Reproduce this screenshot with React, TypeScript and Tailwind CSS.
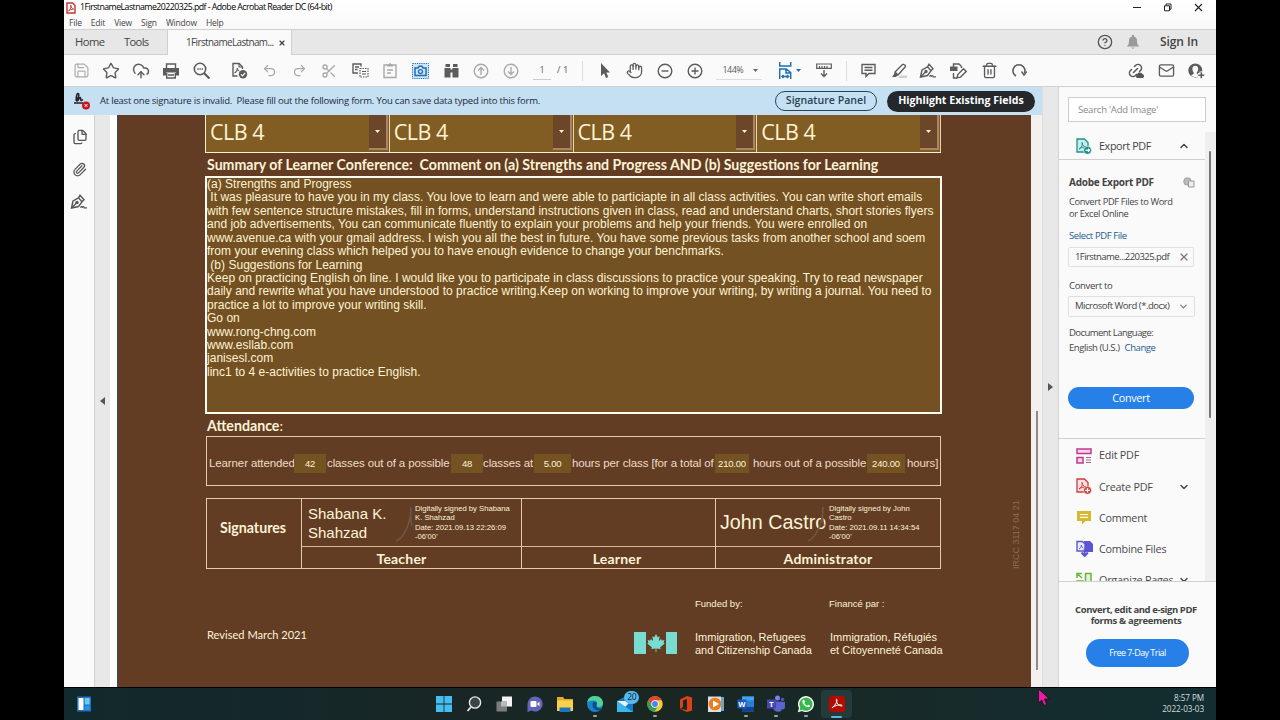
import type { ReactNode } from "react";
import {
  Save, Star, CloudUpload, Undo2, Redo2, Scissors, Hand, Trash2, Mail, Paperclip,
  ChevronUp, ChevronDown, X, CircleHelp, Link2, Files,
} from "lucide-react";

const cream = "#fdf3d6";

function Slot({ children, className = "" }: { children: ReactNode; className?: string }) {
  return <div className={`flex h-6 w-[30px] shrink-0 items-center justify-center ${className}`}>{children}</div>;
}

function Svg({ w = 18, h = 18, box, children }: { w?: number; h?: number; box?: string; children: ReactNode }) {
  return (
    <svg width={w} height={h} viewBox={box ?? `0 0 ${w} ${h}`} fill="none" stroke="currentColor" strokeWidth="1.4" className="shrink-0">
      {children}
    </svg>
  );
}

function SignPen() {
  return (
    <Svg w={18} h={16}>
      <path d="M1.500 14 3 7 8.500 3.800 12 7.800 8.500 12.500Z" />
      <path d="M1.500 14 6.500 9M8.500 3.800l1.500-2.500 4 4.500-2 2" />
      <circle cx="7" cy="8.500" r="1" fill="currentColor" />
      <path d="M10.500 13.800c.8-2 1.800-2 1.800 0 .8-2 1.800-1.500 1.800 0H17" strokeWidth="1.200" />
    </Svg>
  );
}

function TitleBar() {
  return (
    <div className="flex h-[29px] justify-between bg-gradient-to-b from-white to-[#f9f9f9]">
      <div>
        <div className="flex h-[16px] items-center pl-[2px] text-black">
          <Svg w={10} h={12}>
            <path d="M1 1h5.500L9 3.500V11H1Z" fill="#fff" stroke="#c43430" />
            <path d="M2.500 9C5 7 5 5 4.700 3c.3 3 2 4 3 4.200-2 0-3.700.6-5.200 1.800" stroke="#c43430" strokeWidth=".9" />
          </Svg>
          <span className="ml-[4px] text-[8.800px] tracking-[-0.550px] whitespace-pre">1FirstnameLastname20220325.pdf - Adobe Acrobat Reader DC (64-bit)</span>
        </div>
        <div className="flex h-[13px] items-center gap-[9px] pt-px pl-[5px] text-[8.500px] tracking-[-0.180px] text-[#444]">
          <span>File</span><span>Edit</span><span>View</span><span>Sign</span><span>Window</span><span>Help</span>
        </div>
      </div>
      <div className="mt-[2px] mr-[13px] flex h-[10px] items-center gap-[22px] text-[#222]">
        <Svg w={8} h={8}><path d="M0 4.500h8" strokeWidth="1" /></Svg>
        <Svg w={9} h={9}><path d="M1.500 2.800h5v5h-5zM3 2.500V1h5v5.200H6.800" strokeWidth="1" /></Svg>
        <Svg w={9} h={9}><path d="m1 1 7 7M8 1 1 8" strokeWidth="1.100" /></Svg>
      </div>
    </div>
  );
}

function TabBar() {
  return (
    <div className="flex h-[26px] border-y border-[#cfcfcf] bg-[#e7e7e7] text-[#444]">
      <div className="flex w-[104px] items-center border-r border-[#d0d0d0] pt-px pl-[11px] text-[11.200px]">
        <span className="w-[49px] tracking-[-0.500px]">Home</span>
        <span className="tracking-[-0.650px]">Tools</span>
      </div>
      <div className="-mb-px flex w-[124px] items-center border-r border-[#d0d0d0] bg-[#fafafa] pl-[18px]">
        <span className="w-[92px] text-[9.900px] tracking-[-0.580px]">1FirstnameLastnam...</span>
        <X className="h-[8px] w-[8px]" strokeWidth={3.500} />
      </div>
      <div className="ml-auto flex items-center pr-[18px]">
        <CircleHelp className="h-4 w-4 text-[#555]" strokeWidth={2} />
        <svg width="12" height="14" viewBox="0 0 12 14" className="ml-[14px]" fill="#9a9a9a"><path d="M5 0h2v1.500c2.500.6 3 2.500 3 4.500 0 2.500.5 4 2 5v.5H0V11c1.500-1 2-2.500 2-5 0-2 .5-3.900 3-4.500ZM4.500 12.500h3L6 14Z" /></svg>
        <span className="ml-[21px] text-[12px] font-semibold tracking-[-0.100px]">Sign In</span>
      </div>
    </div>
  );
}

function ToolBar() {
  return (
    <div className="flex h-[32px] items-center border-b border-[#d0d0d0] bg-[#fafafa] pl-[2px] text-[#5c5c5c]">
      <Slot className="text-[#adadad]"><Save size={17} strokeWidth={1.700} /></Slot>
      <Slot><Star size={18} strokeWidth={1.900} /></Slot>
      <Slot><CloudUpload size={18} strokeWidth={1.900} /></Slot>
      <Slot><Svg w={16} h={16}>
        <path d="M3.500 5V1h9v4" /><path d="M0 5h16v7.500h-3V9.500H3v3H0Z" fill="currentColor" stroke="none" /><path d="M3.700 10v5h8.600v-5M5 12h6" />
      </Svg></Slot>
      <Slot><Svg w={17} h={17}>
        <circle cx="7" cy="7" r="5.700" strokeWidth="1.600" /><path d="m11 11 5.500 5.500" strokeWidth="2.200" /><path d="M4.200 7h1.400M6.400 7h1.400M8.600 7h1.400" strokeWidth="1.500" />
      </Svg></Slot>
      <Slot className="ml-[8px]"><Svg w={17} h={17}>
        <path d="M6.500 14H2V1.500h6l3.500 3.500V7" /><path d="M8 1.500V5h3.500M3.500 11c2.500-1.500 3-3 2.700-5 .3 2 1 2.700 2 3" strokeWidth="1.100" />
        <circle cx="12" cy="12.300" r="4.200" fill="currentColor" stroke="none" /><path d="m10 12.300 1.500 1.500 2.700-3" stroke="#fff" strokeWidth="1.200" />
      </Svg></Slot>
      <Slot className="text-[#a9a9a9]"><Undo2 size={15} strokeWidth={2} /></Slot>
      <Slot className="text-[#a9a9a9]"><Redo2 size={15} strokeWidth={2} /></Slot>
      <Slot className="text-[#a9a9a9]"><Scissors size={16} strokeWidth={2} /></Slot>
      <Slot className="ml-[1px]"><Svg w={17} h={15}>
        <path d="M6 10H1V1h8v2.500M3 4h4M3 6.500h2.500" /><path d="M8 5.500h8V14H8Z" strokeDasharray="1.500 1" strokeWidth="1.200" /><path d="M10 8.500h4M10 11h4" strokeWidth="1.100" />
      </Svg></Slot>
      <Slot className="text-[#a9a9a9]"><Svg w={14} h={17}>
        <path d="M1 3h12v12.500H1ZM4 8h6M4 11h4" /><path d="M4 4.500V2.500h1.500L7 .8l1.500 1.700H10v2Z" fill="currentColor" stroke="none" />
      </Svg></Slot>
      <Slot className="text-[#1c6fb7]"><Svg w={17} h={16}>
        <path d="M.5.5h16v15H.5Z" fill="#cfe5f8" strokeDasharray="1.200 1" strokeWidth="1" />
        <path d="M3 5h3l1-1.700h3L11 5h3v7.500H3Z" strokeWidth="1.500" /><circle cx="8.500" cy="8.600" r="2" strokeWidth="1.300" />
      </Svg></Slot>
      <Slot className="ml-[1px]"><Svg w={15} h={14}>
        <path d="M1.500 0H6v3H1.500ZM9 0h4.500v3H9ZM.5 4h6v9.500h-6ZM8.500 4h6v9.500h-6ZM6.500 5.500h2v3h-2z" fill="currentColor" stroke="none" />
      </Svg></Slot>
      <Slot className="text-[#a9a9a9]"><Svg w={16} h={16}><circle cx="8" cy="8" r="6.800" /><path d="M8 12V4.500M5 7.500l3-3 3 3" /></Svg></Slot>
      <Slot className="text-[#a9a9a9]"><Svg w={16} h={16}><circle cx="8" cy="8" r="6.800" /><path d="M8 4v7.500M5 8.500l3 3 3-3" /></Svg></Slot>
      <div className="ml-[7px] flex h-[18px] w-[18px] items-center justify-center border-b border-[#ccc] text-[9px]">1</div>
      <span className="ml-[6px] text-[9.500px]">/ 1</span>
      <div className="ml-[14px] h-[20px] w-px bg-[#dcdcdc]" />
      <Slot className="ml-[7px]"><Svg w={12} h={16}><path d="M2 0v13l3-2.800 2 4.800 2.300-1-2-4.600H11Z" fill="currentColor" stroke="none" /></Svg></Slot>
      <Slot className="-ml-px"><Hand size={17} strokeWidth={1.800} /></Slot>
      <Slot className="ml-[1px]"><Svg w={16} h={16}><circle cx="8" cy="8" r="6.800" /><path d="M4.500 8h7" /></Svg></Slot>
      <Slot><Svg w={16} h={16}><circle cx="8" cy="8" r="6.800" /><path d="M4.500 8h7M8 4.500v7" /></Svg></Slot>
      <div className="ml-[6px] flex h-[18px] w-[46px] items-center justify-between border-b border-[#ddd] pr-[4px] pl-[6px] text-[9px] tracking-[-0.500px]">
        144% <svg width="5" height="3" viewBox="0 0 5 3" fill="#666"><path d="M0 0h5L2.500 3Z" /></svg>
      </div>
      <div className="ml-[17px] flex w-[22px] items-center gap-[4px] text-[#1c6fb7]">
        <Svg w={13} h={17}><path d="M.7 0v4h11V0M.7 17V7h6.500l4.500 3.500V17M7 7v4h4.500M3 14.500h6.500M4.500 13 3 14.500 4.500 16M8 13l1.500 1.500L8 16" strokeWidth="1.500" /></Svg>
        <svg width="5" height="3" viewBox="0 0 5 3" fill="currentColor" className="shrink-0"><path d="M0 0h5L2.500 3Z" /></svg>
      </div>
      <Slot className="ml-[8px]"><Svg w={16} h={15}><path d="M.7 1h14.600v4.300H.7ZM3.500 3v2M6 3v2M8.500 3v2M11 3v2" strokeWidth="1.200" /><path d="M8 7v6.500M5 10.500l3 3 3-3" /></Svg></Slot>
      <div className="ml-[7px] h-[20px] w-px bg-[#dcdcdc]" />
      <Slot className="ml-[6px]"><Svg w={15} h={15}><path d="M1 1.500h13v9H8L5 13.500v-3H1ZM3.500 4.500h8M3.500 7.300h8" /></Svg></Slot>
      <Slot><Svg w={17} h={15}><path d="M8 15h9v-2.500H10Z" fill="#d0d0d0" stroke="none" /><path d="M12.500 1.500 5 9v3h3l7.500-8.500c0-1.500-1.500-2.500-3-2ZM5 9l3 3" /><path d="M4.500 10.500 2 14h4l1.500-1.500Z" fill="currentColor" stroke="none" /></Svg></Slot>
      <Slot><SignPen /></Slot>
      <Slot><Svg w={17} h={16}><path d="M3.500 4V1H9l2.500 2.500V5M3.500 10v5H7" /><path d="M0 3.500h7.500v4.500H0Z" fill="currentColor" stroke="none" /><path d="m7 14.800.8-3.300 5.700-5.700 2.700 2.700-5.700 5.600Z" /></Svg></Slot>
      <Slot className="ml-[1px]"><Trash2 size={17} strokeWidth={1.900} /></Slot>
      <Slot><Svg w={15} h={15}><path d="M4 13A6 6 0 1 1 12.500 10" strokeWidth="1.600" /><path d="M9.500 8.500 12 12l3-3.500" /></Svg></Slot>
      <div className="mr-[5px] ml-auto flex">
        <Slot><div className="relative"><Link2 size={17} strokeWidth={2.200} className="-rotate-45" /><svg width="10" height="6" viewBox="0 0 10 6" className="absolute -right-px bottom-[1px]"><path d="M2 6a2 2 0 0 1 0-3.500A3 3 0 0 1 7.500 2 2.200 2.200 0 0 1 8 6Z" fill="#555" /></svg></div></Slot>
        <Slot className="ml-px"><Mail size={17} strokeWidth={1.900} /></Slot>
        <Slot><Svg w={17} h={16}>
          <path fillRule="evenodd" d="M7.300.5a6.900 6.900 0 1 1 0 14 6.900 6.900 0 0 1 0-14ZM7.300 2.700C5.200 2.700 4.300 4.200 4.400 6c.1 1.500.5 2.500 1.300 3.500v1.300c-.6.6-1.700.9-2.600 1.600 2.500 2 5.900 2 8.300 0-.8-.7-2-1-2.600-1.600V9.500c.8-1 1.300-2 1.400-3.500.1-1.800-.8-3.300-2.900-3.300Z" fill="currentColor" stroke="none" />
          <path d="M13.300 8.500v7M9.800 12h7" stroke="#fafafa" strokeWidth="3.800" /><path d="M13.300 9.200v6M10.300 12.200h6" strokeWidth="1.600" />
        </Svg></Slot>
      </div>
    </div>
  );
}

function InfoBar() {
  return (
    <div className="flex h-[28px] shrink-0 items-center bg-[#c5e0f3] pr-[7px] pl-[9px] text-[#1d2a33]">
      <Svg w={18} h={18}>
        <path d="M1 11h9" stroke="#222" strokeWidth="1.500" />
        <path d="M2.500 8.500C6 6.500 6.500 2 5 1.500S2.500 8.500 4 9s2-4 3.200-3.500S7 9 8.500 8.500l1.500-1" stroke="#222" strokeWidth="1.500" />
        <circle cx="13" cy="13.500" r="4" fill="#c4161c" stroke="none" /><path d="m11.600 12.100 2.800 2.800M14.400 12.100l-2.800 2.800" stroke="#fff" strokeWidth="1" />
      </Svg>
      <span className="ml-[9px] text-[9.500px] tracking-[-0.215px] whitespace-pre">At least one signature is invalid.  Please fill out the following form. You can save data typed into this form.</span>
      <div className="ml-auto flex h-[20px] w-[102px] items-center justify-center rounded-full border-[1.500px] border-[#2c4250] text-[10.600px] font-semibold whitespace-nowrap text-[#2c4250]">Signature Panel</div>
      <div className="ml-[10px] flex h-[21px] w-[148px] items-center justify-center rounded-full bg-[#24282b] text-[10.600px] font-bold whitespace-nowrap text-white">Highlight Existing Fields</div>
    </div>
  );
}

const summary = [
  "(a) Strengths and Progress",
  " It was pleasure to have you in my class. You love to learn and were able to particiapte in all class activities. You can write short emails",
  "with few sentence structure mistakes, fill in forms, understand instructions given in class, read and understand charts, short stories flyers",
  "and job advertisements, You can communicate fluently to explain your problems and help your friends. You were enrolled on",
  "www.avenue.ca with your gmail address. I wish you all the best in future. You have some previous tasks from another school and soem",
  "from your evening class which helped you to have enough evidence to change your benchmarks.",
  " (b) Suggestions for Learning",
  "Keep on practicing English on line. I would like you to participate in class discussions to practice your speaking. Try to read newspaper",
  "daily and rewrite what you have understood to practice writing.Keep on working to improve your writing, by writing a journal. You need to",
  "practice a lot to improve your writing skill.",
  "Go on",
  "www.rong-chng.com",
  "www.esllab.com",
  "janisesl.com",
  "linc1 to 4 e-activities to practice English.",
];

function Field({ children, className }: { children: ReactNode; className: string }) {
  return <span className={`flex h-[19px] shrink-0 items-center justify-center bg-[#755222] pt-px text-[9.500px] tracking-[-0.200px] text-[#fdf3d6] ${className}`}>{children}</span>;
}

function LevelCell() {
  return (
    <div className="flex flex-1 justify-between border-r border-[#e9d2ae] bg-[#815c23] pl-[4px] text-[21.500px] leading-[34px] tracking-[-0.500px] text-[#fdf3d6]">
      <span className="font-[Open_Sans,sans-serif]">CLB 4</span>
      <div className="mr-[1px] flex h-[35px] w-[19px] items-center justify-center border-r-2 border-b-2 border-[#a98466] bg-[#6c4629]">
        <svg width="5" height="3" viewBox="0 0 5 3" fill={cream}><path d="M0 0h5L2.500 3Z" /></svg>
      </div>
    </div>
  );
}

function AcrobatSwirl() {
  return <Svg w={22} h={38}><path d="M2 36c8-3 15-18 15-34-1 8-.5 14 1 19" stroke="#705840" strokeWidth="1.500" /></Svg>;
}

function SignatureCell({ name, lines, role, className }: { name: ReactNode; lines: string[]; role: ReactNode; className: string }) {
  return (
    <div className={`flex shrink-0 flex-col border-r border-[#e6cda9] ${className}`}>
      <div className="flex h-[48px] shrink-0 border-b border-[#d8b893]">{name}
        <div className="w-[106px] pt-[5px] font-['Liberation_Sans',sans-serif] text-[7.700px] leading-[9.300px] whitespace-nowrap">
          {lines.map((l) => <div key={l}>{l}</div>)}
        </div>
      </div>
      <div className="flex h-[21px] items-center justify-center pt-[2px] font-[Lato,sans-serif] text-[14px] leading-[18px] font-bold tracking-[0.200px]">{role}</div>
    </div>
  );
}

function Document() {
  return (
    <div className="flex h-full w-[914px] flex-col border-l border-[#3a4a5e] bg-[#623d24] pl-[87px] font-['Liberation_Sans',sans-serif] text-[#fdf3d6]">
      <div className="flex h-[38px] w-[736px] border-b border-l border-[#fdf3d6]">
        <LevelCell /><LevelCell /><LevelCell /><LevelCell />
      </div>
      <div className="flex h-[23px] items-center pt-px pl-[2px] font-[Lato,sans-serif] text-[14.170px] font-bold whitespace-pre">Summary of Learner Conference:  Comment on (a) Strengths and Progress AND (b) Suggestions for Learning</div>
      <div className="h-[238px] w-[737px] border-2 border-[#fffaf0] bg-[#745122] text-[12px] tracking-[0.020px]">
        {summary.map((l) => <div key={l} className="h-[13.430px] leading-[13.430px] whitespace-pre">{l}</div>)}
      </div>
      <div className="flex h-[22px] items-center pt-px pl-[2px] font-[Lato,sans-serif] text-[14.200px] font-bold">Attendance<span className="font-normal">:</span></div>
      <div className="ml-[1px] flex h-[50px] w-[735px] items-center border border-[#e6cda9] pt-[5px] pl-[2px] text-[11.500px] tracking-[-0.110px] whitespace-nowrap text-[#f0dcc4]">
        <span className="w-[85px]">Learner attended</span><Field className="w-[32px]">42</Field>
        <span className="w-[125px] pl-[1px]">classes out of a possible</span><Field className="w-[32px]">48</Field>
        <span className="w-[51px]">classes at</span><Field className="w-[37px]">5.00</Field>
        <span className="w-[144px] pl-[1px]">hours per class [for a total of</span><Field className="w-[34px]">210.00</Field>
        <span className="w-[118px] pl-[4px]">hours out of a possible</span><Field className="w-[38px]">240.00</Field>
        <span className="pl-[2px]">hours]</span>
      </div>
      <div className="mt-[12px] ml-[1px] flex h-[71px] w-[817px] justify-between">
        <div className="flex w-[735px] shrink-0 border-y border-l border-[#e6cda9]">
          <div className="flex w-[95px] shrink-0 items-center justify-center border-r border-[#e6cda9] pr-[2px] pb-[11px] font-[Lato,sans-serif] text-[14.200px] font-bold">Signatures</div>
          <SignatureCell className="w-[220px]" role={<span className="pr-[20px]">Teacher</span>} lines={["Digitally signed by Shabana", "K. Shahzad", "Date: 2021.09.13 22:26:09", "-06'00'"]}
            name={<><div className="w-[84px] shrink-0 pt-[5px] pl-[6px] text-[15px] leading-[19px] whitespace-nowrap">Shabana K.<br />Shahzad</div><div className="-mr-[1px] w-[30px] shrink-0 pt-[6px] pl-[8px]"><AcrobatSwirl /></div></>} />
          <SignatureCell className="w-[194px]" role={<span className="pr-[3px]">Learner</span>} lines={[]} name={null} />
          <SignatureCell className="w-[225px]" role="Administrator" lines={["Digitally signed by John", "Castro", "Date: 2021.09.11 14:34:54", "-06'00'"]}
            name={<div className="relative flex w-[113px] shrink-0 items-center pl-[4px] text-[19.700px] whitespace-nowrap">John Castro<div className="absolute top-[6px] left-[90px]"><AcrobatSwirl /></div></div>} />
        </div>
        <div className="w-[14px] rotate-180 text-[9px] leading-[14px] whitespace-nowrap text-[#8d6c51] [writing-mode:vertical-rl]">IRCC 3117 04 21</div>
      </div>
      <div className="mt-[28px] ml-[490px] flex text-[9.500px] leading-[13px]"><span className="w-[134px]">Funded by:</span><span>Financé par :</span></div>
      <div className="mt-[21px] flex text-[11px] leading-[12.500px] whitespace-nowrap">
        <div className="-mt-[2px] w-[429px] pl-[2px] font-[Lato,sans-serif] text-[11.100px]">Revised March 2021</div>
        <svg width="43" height="22" viewBox="0 0 43 22" fill="#78ddd0" className="mt-px mr-[18px]">
          <path d="M0 0h12v22H0ZM32 0h11v22H32ZM22 2l1.700 3.200 2-.9-.8 4.700 2.300-2 .6 1.400 2.700-.4-.9 2.700 1.200.8-4.600 3.800.4 1.700-4.200-.6V20h-.8v-3.600l-4.200.6.4-1.700-4.600-3.800 1.200-.8-.9-2.700 2.700.4.600-1.400 2.300 2-.8-4.700 2 .9Z" />
        </svg>
        <div className="w-[135px]">Immigration, Refugees<br />and Citizenship Canada</div>
        <div>Immigration, Réfugiés<br />et Citoyenneté Canada</div>
      </div>
    </div>
  );
}

function PdfSheet({ color, fill, badge }: { color: string; fill: string; badge: ReactNode }) {
  return (
    <svg width="16" height="17" viewBox="0 0 16 17" fill="none" stroke={color} strokeWidth="1.300" className="shrink-0">
      <path d="M1 1h7.500L12 4.500V14H1Z" fill={fill} /><path d="M3 11c3-2 3.500-4 3-6.500.5 3 2 4 4 4.500-3 0-5 .5-7 2" strokeWidth="1" />
      <circle cx="11.500" cy="12.300" r="4" fill={color} stroke="#fff" strokeWidth=".6" />{badge}
    </svg>
  );
}

function ToolRow({ icon, label, chevron }: { icon: ReactNode; label: string; chevron?: boolean }) {
  return (
    <div className="flex h-[31.100px] shrink-0 items-center pr-[21px] pl-[17px] text-[10.800px] tracking-[-0.230px] text-[#4a4a4a]">
      <div className="w-[23px]">{icon}</div><span className="whitespace-nowrap">{label}</span>
      {chevron && <ChevronDown size={12} strokeWidth={3} className="mr-[-6px] ml-auto" />}
    </div>
  );
}

function SidePanel() {
  return (
    <div className="flex w-[158px] flex-col border-l border-[#d4d4d4] bg-[#fafafa] text-[9.500px] tracking-[-0.400px] text-[#444]">
      <div className="mt-[10px] ml-[9px] flex h-[25px] w-[138px] shrink-0 items-center border border-[#cdcdcd] bg-white pt-px pl-[9px] tracking-[-0.220px] text-[#8a8a8a]">Search 'Add Image'</div>
      <div className="mt-[10px] flex h-[450px] shrink-0 overflow-hidden border-b border-[#d0d0d0]">
        <div className="flex w-[146px] flex-col">
          <div className="flex h-[28px] shrink-0 items-center border-b border-[#cfcfcf] pt-px pl-[17px] text-[10.800px] tracking-[-0.380px]">
            <div className="w-[23px]"><PdfSheet color="#1d8f8a" fill="#c8ece9" badge={<path d="M9.500 12.300h4M12 10.800l1.500 1.500-1.500 1.500" stroke="#fff" />} /></div>
            Export PDF<ChevronUp size={12} strokeWidth={3} className="mr-[15px] ml-auto" />
          </div>
          <div className="flex h-[279px] shrink-0 flex-col border-b border-[#cfcfcf] pr-[10px] pl-[10px]">
            <div className="mt-[14px] flex h-[16px] items-center justify-between text-[10px] font-bold tracking-[-0.250px]">Adobe Export PDF
              <Svg w={12} h={11}><circle cx="4.500" cy="4.500" r="3.800" fill="#bbb" stroke="#999" strokeWidth=".8" /><path d="M5.500 4h5.500v6H5.500Z" fill="#eee" stroke="#999" strokeWidth="1" /></Svg>
            </div>
            <div className="mt-[6px] text-[9.300px] leading-[11.500px] tracking-[-0.360px] whitespace-nowrap">Convert PDF Files to Word<br />or Excel Online</div>
            <div className="mt-[11px] h-[12px] leading-[12px] text-[#1d5c8e]">Select PDF File</div>
            <div className="mt-[5px] -ml-px flex h-[20px] w-[126px] shrink-0 items-center justify-between rounded-[2px] border border-[#e0e0e0] pr-[3px] pl-[6px] tracking-[-0.570px]">1Firstname...220325.pdf<X size={12} strokeWidth={2.500} className="shrink-0 text-[#777]" /></div>
            <div className="mt-[13px] h-[12px] leading-[12px] tracking-[-0.300px]">Convert to</div>
            <div className="mt-[4px] -ml-px flex h-[21px] w-[127px] shrink-0 items-center justify-between rounded-[2px] border border-[#e0e0e0] pr-[5px] pl-[6px] tracking-[-0.480px] whitespace-nowrap">Microsoft Word (*.docx)<ChevronDown size={11} strokeWidth={2.500} className="shrink-0 text-[#777]" /></div>
            <div className="mt-[9px] h-[14px] leading-[14px] tracking-[-0.550px] whitespace-nowrap">Document Language:</div>
            <div className="h-[15px] leading-[15px] tracking-[-0.430px] whitespace-nowrap">English (U.S.)<span className="ml-[5px] text-[#1d5c8e]">Change</span></div>
            <div className="mt-[32px] -ml-px flex h-[22px] w-[126px] shrink-0 items-center justify-center rounded-full bg-[#2680e8] text-[10.800px] tracking-[-0.300px] text-white">Convert</div>
          </div>
          <div className="mt-px flex flex-col">
            <ToolRow label="Edit PDF" icon={<Svg w={16} h={16}><path d="M1 1h14v4.500H1ZM1 9.500h6V15H1Z" stroke="#c03a8a" fill="#f6d3e8" strokeWidth="1.500" /><path d="M10 9.500h5M10 12h5M10 14.500h5" stroke="#a06a90" strokeWidth="1" /></Svg>} />
            <ToolRow label="Create PDF" chevron icon={<PdfSheet color="#cf3b3e" fill="#fae0df" badge={<path d="M9.200 12.300h4.600M11.500 10v4.600" stroke="#fff" />} />} />
            <ToolRow label="Comment" icon={<Svg w={16} h={15}><path d="M1 1h14v10H9.500L6 14.500V11H1Z" fill="#d6b92c" stroke="none" /><path d="M4 4.500h8M4 7.300h8" stroke="#fff" strokeWidth="1.200" /></Svg>} />
            <ToolRow label="Combine Files" icon={<Svg w={18} h={17}><path d="M8 1h6l3 3v8H9Z" fill="#5b56cf" stroke="none" /><path d="M1 1.500h5.500L9 4v7H1Z" stroke="#5b56cf" fill="#eceafc" /><path d="M3 9c2-1 2.500-2.500 2.300-4 .3 2 1 2.500 2 3" stroke="#5b56cf" strokeWidth="1" /><path d="M8.700 9v6M5.500 12.500l3.200 3.500 3.200-3.500" stroke="#5b56cf" strokeWidth="2" /></Svg>} />
            <ToolRow label="Organize Pages" chevron icon={<Svg w={16} h={16}><path d="M1 1.500 6 6M1 6V1.500h5M1 9h6v5H1ZM9.500 1.500H15V14H9.500Z" stroke="#6bb53f" fill="#e2f3d6" strokeWidth="1.500" /></Svg>} />
          </div>
        </div>
        <div className="w-[11px] shrink-0 bg-[#efefef] pt-[19px] pl-[4px]"><div className="h-[267px] w-[2px] rounded bg-[#777]" /></div>
      </div>
      <div className="mt-[23px] pr-[3px] text-center text-[9.500px] leading-[10.500px] font-bold tracking-[-0.330px] whitespace-nowrap"><div className="tracking-[-0.400px]">Convert, edit and e-sign PDF</div>forms &amp; agreements</div>
      <div className="mt-[13px] ml-[27px] flex h-[28px] w-[103px] shrink-0 items-center justify-center rounded-full bg-[#2680e8] text-[9px] tracking-[-0.550px] text-white">Free 7-Day Trial</div>
    </div>
  );
}

function TaskIcon({ children, mark }: { children: ReactNode; mark?: "dot" | "active" }) {
  return (
    <div className={`relative flex h-[28px] w-[30.200px] shrink-0 items-center justify-center ${mark === "active" ? "rounded bg-[#243a3b]" : ""}`}>
      <svg width="18" height="18" viewBox="0 0 18 18">{children}</svg>
      {mark === "dot" && <span className="absolute bottom-[1px] h-[2px] w-[4px] rounded bg-[#9aa5a5]" />}
      {mark === "active" && <span className="absolute bottom-0 h-[2px] w-[11px] rounded bg-[#5db4e6]" />}
    </div>
  );
}

function TaskBar() {
  return (
    <div className="flex h-[33px] items-center border-t border-black bg-gradient-to-r from-[#12292d] via-[#1a2622] to-[#122e30]">
      <div className="w-[365px] pl-[5px]">
        <TaskIcon><path d="M2 1.500h14v15H2Z" fill="#1c6fc4" /><path d="M3.500 3h5v12h-5Z" fill="#fff" /><path d="M9.700 3h5v6.500h-5Z" fill="#6ec8f7" /><path d="M9.700 10.700h5V15h-5Z" fill="#2b95e0" /></TaskIcon>
      </div>
      <TaskIcon><path d="M1 1h7.600v7.600H1ZM9.400 1H17v7.600H9.400ZM1 9.400h7.600V17H1ZM9.400 9.400H17V17H9.400Z" fill="#45bdf3" /></TaskIcon>
      <TaskIcon><circle cx="10" cy="7.500" r="5.600" fill="#3a4644" stroke="#e8e8e8" strokeWidth="1.400" /><path d="m6 12-3.500 4" stroke="#e8e8e8" strokeWidth="1.800" /></TaskIcon>
      <TaskIcon><path d="M7 1.500h10v10H7Z" fill="#f2f2f2" /><path d="M1.500 6.500H12v10H1.500Z" fill="#7c7c7c" /><path d="M6 6.500h6v5H6Z" fill="#b9b9b9" /></TaskIcon>
      <TaskIcon><path d="M9 1.500a7.500 7.500 0 1 1-3.500 14L1.500 17V9A7.500 7.500 0 0 1 9 1.500Z" fill="#6264b5" /><rect x="4.500" y="6" width="6" height="6" rx="1" fill="#fff" /><path d="m11 9 2.500-2.500v5Z" fill="#fff" /></TaskIcon>
      <TaskIcon><path d="M1 2h6l1.500 2H17V16H1Z" fill="#e9a92a" /><path d="M1 5.500h16V16H1Z" fill="#fbd04d" /><path d="M3.500 12.500h11V17h-11Z" fill="#1b75bb" /></TaskIcon>
      <TaskIcon mark="dot"><circle cx="9" cy="9" r="8" fill="#1a83cc" /><path d="M1.200 7.500C2 3 5 1 9 1c5 0 8 3.500 8 7 0 3-2.500 4.500-5 4-2-.3-1.500-1.500-1-3 .4-1.700-1-3.500-3.500-3.500S2.500 6 1.200 7.500Z" fill="#4fd197" /><path d="M7 7.500c-1.500 3 0 7 4.500 8 2 0 4-1.200 4.500-2.500-2 1-4.500.5-5.500-1.500-.6-1.500.4-2 .4-3s-2.400-2.500-3.900-1Z" fill="#0c4f8f" /></TaskIcon>
      <div className="relative">
        <TaskIcon><path d="M1 6 9 1.500 17 6v11H1Z" fill="#1579c4" /><path d="M1 6h14l-6 6Z" fill="#e8f5fc" /><path d="m1 6 16 11H1Z" fill="#3bb6ee" /></TaskIcon>
        <span className="absolute top-[1px] right-[1px] flex h-[13px] w-[15px] items-center justify-center rounded-full bg-[#56b9ee] text-[8.500px] tracking-[-0.400px] text-[#0b2438]">20</span>
      </div>
      <TaskIcon mark="dot"><circle cx="9" cy="9" r="7.700" fill="#f6c833" /><path d="M2.300 5.200A7.700 7.700 0 0 1 15.700 5.200H9L5.700 11Z" fill="#df4437" /><path d="M2.300 5.200A7.700 7.700 0 0 0 8.500 16.700L12.200 11 5.700 11Z" fill="#2fa153" /><circle cx="9" cy="9" r="3.700" fill="#fff" /><circle cx="9" cy="9" r="2.900" fill="#4285f4" /></TaskIcon>
      <TaskIcon><path d="m3 4.500 7-3.500 5 1.500v13L10 17l-7-3 7 .8V4L6 5.200V12l-3 2Z" fill="#dd4016" /></TaskIcon>
      <TaskIcon><path d="M1 1.500h13V17H1Z" fill="#d9dfe2" /><path d="M14 2h3v14h-3Z" fill="#6ba7c5" /><circle cx="8" cy="9" r="6.300" fill="#ee7c1f" /><path d="m6 5.500 6 3.500-6 3.500Z" fill="#fff" /></TaskIcon>
      <TaskIcon mark="dot"><path d="M5 1.500h12v15H5Z" fill="#2b7cd3" /><path d="M5 1.500h12v4H5Z" fill="#41a5ee" /><path d="M5 12h12v4.500H5Z" fill="#15418f" /><path d="M.5 4.500h9v9h-9Z" fill="#185abd" /><text x="5" y="11.700" fontSize="7.500" fontWeight="700" fill="#fff" textAnchor="middle">W</text></TaskIcon>
      <TaskIcon mark="dot"><circle cx="10.500" cy="3" r="2.500" fill="#7b83eb" /><circle cx="15.500" cy="4.500" r="1.700" fill="#5059c9" /><path d="M6 6.500h8.500V16C10 18 7 16 6 13ZM14.500 7H18v5c0 2-2 3-3.500 2Z" fill="#5b63cf" /><path d="M0 4.500h9v9H0Z" fill="#4349ae" /><text x="4.500" y="11.700" fontSize="7.500" fontWeight="700" fill="#fff" textAnchor="middle">T</text></TaskIcon>
      <TaskIcon mark="dot"><path d="M.8 17.200 2 13a8 8 0 1 1 3 3Z" fill="#fff" /><path d="m2.500 15.500.8-2.900a6.600 6.600 0 1 1 2.200 2.200Z" fill="#35b84c" /><path d="M6 5c-1.500 1.500 0 4 1.500 5.500S11.500 13 13 11.500c.5-.7-.2-1-1.700-1.800L10 10.700C8.500 10 8 9.300 7.300 8l.9-1C7.500 5 7 4.300 6 5Z" fill="#fff" /></TaskIcon>
      <TaskIcon mark="active"><rect x="1" y="1" width="16" height="16" rx="2.500" fill="#b30b00" /><path d="M4 13c1-2 5-3.500 5-8 0-1.500-1-1-.7.5C9 9 11 11 13.500 11c1.500 0 .5-1.500-2-1.200-3 .3-6.500 1.700-7.500 3.200Z" fill="none" stroke="#fff" strokeWidth="1" /></TaskIcon>
      <div className="mr-[12px] ml-auto text-right text-[8.200px] leading-[10.700px] tracking-[-0.100px] text-[#d5dcdc]">8:57 PM<br />2022-03-03</div>
    </div>
  );
}

export default function App() {
  return (
    <div className="relative h-[720px] w-[1280px] overflow-hidden bg-black px-[64px] font-['Open_Sans',sans-serif]">
      <div className="flex h-full flex-col">
        <TitleBar />
        <TabBar />
        <ToolBar />
        <div className="flex h-[600px] min-h-0">
          <div className="flex w-[978px] flex-col">
            <InfoBar />
            <div className="flex min-h-0 flex-1 overflow-hidden">
              <div className="flex w-[31px] flex-col items-center gap-[17px] border-r border-[#d0d0d0] bg-[#fafafa] pt-[14px] text-[#555]">
                <Files size={16} strokeWidth={2} className="ml-px" />
                <Paperclip size={15} strokeWidth={2} />
                <SignPen />
              </div>
              <div className="flex w-[15px] items-center justify-center bg-[#e8e8e8]"><svg width="5" height="8" viewBox="0 0 5 8" fill="#555"><path d="M5 0v8L0 4Z" /></svg></div>
              <div className="w-[7px] bg-white" />
              <Document />
              <div className="flex w-[11px] justify-center bg-[#f3f0ef] pt-[296px] pl-px"><div className="h-[259px] w-[2px] bg-[#8c8c8c]" /></div>
            </div>
          </div>
          <div className="flex w-[16px] items-center justify-center border-l border-[#ddd] bg-[#e8e8e8]"><svg width="5" height="8" viewBox="0 0 5 8" fill="#555"><path d="M0 0v8l5-4Z" /></svg></div>
          <SidePanel />
        </div>
        <TaskBar />
      </div>
      <svg width="14" height="20" viewBox="0 0 14 20" className="absolute top-[688px] left-[1037px]"><path d="M1.500 1v14l3.200-3 2.300 5.500 2.700-1.200-2.300-5.300 4.800-.2Z" fill="#f01aa8" stroke="#111" strokeWidth=".8" /></svg>
    </div>
  );
}
